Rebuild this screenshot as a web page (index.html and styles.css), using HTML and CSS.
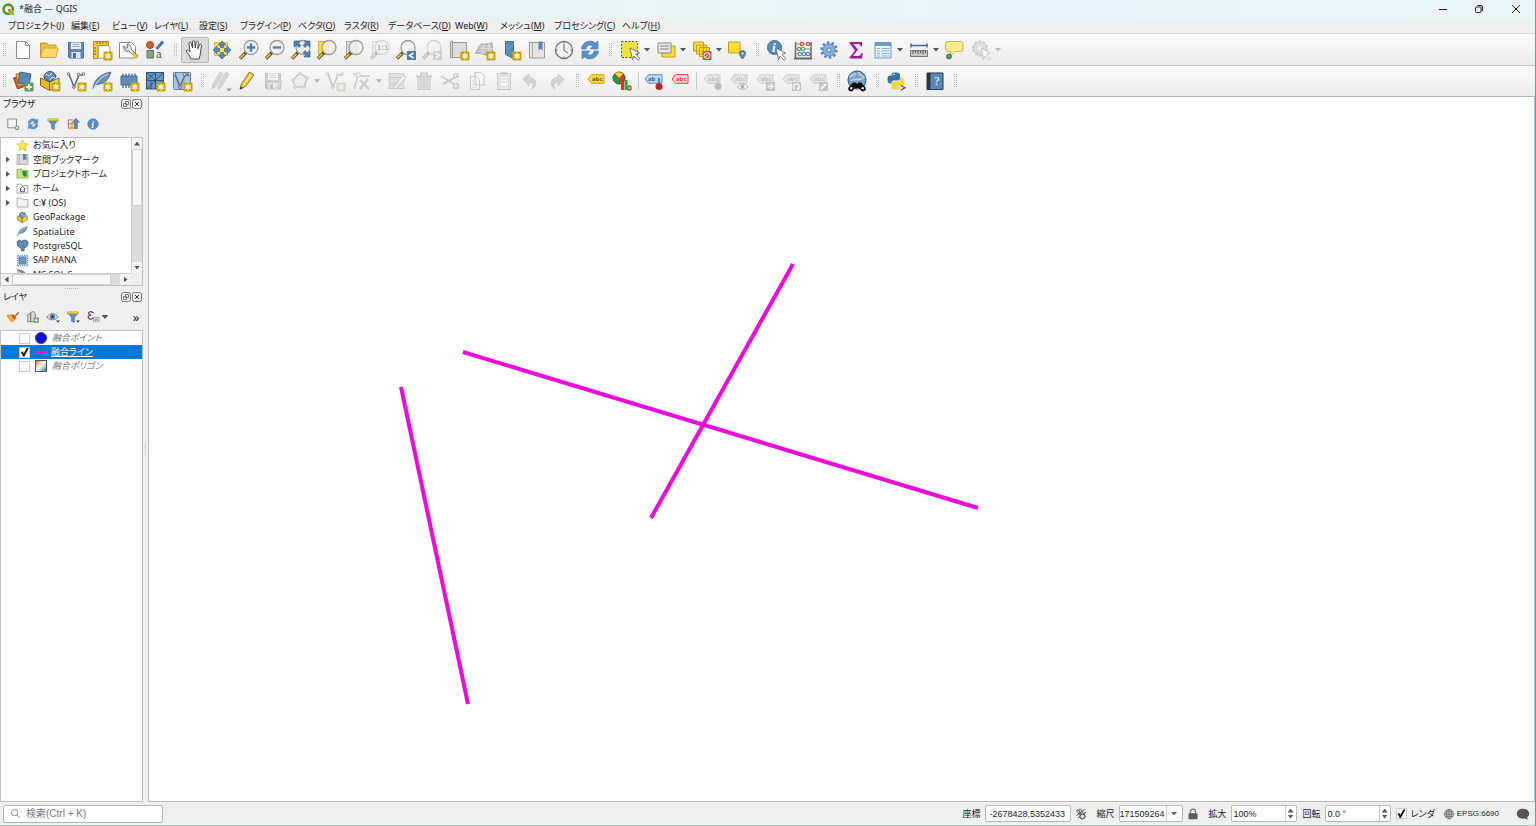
FILE: index.html
```html
<!DOCTYPE html>
<html lang="ja">
  <head>
    <meta charset="utf-8" />
    <meta name="viewport" content="width=device-width" />
    <title>*融合 — QGIS</title>
    <link rel="stylesheet" href="styles.css">
  </head>
  <body>
    <svg class="sprite" aria-hidden="true">
      <!-- shared pieces -->
      <symbol id="badge" viewBox="0 0 24 24">
        <rect x="13.5" y="13.5" width="9" height="9" rx="1" fill="#c9a30c"/>
        <path d="M18 14.800v6.400M15.200 16.400l5.600 3.200M20.800 16.400l-5.600 3.200" stroke="#fff7cf" stroke-width="1.300"/>
      </symbol>
      <symbol id="lens" viewBox="0 0 24 24">
        <path d="M3 20.500l6-6" stroke="#4a4230" stroke-width="3.200"/>
        <path d="M3.200 20.200l4.300-4.300" stroke="#f2c230" stroke-width="1.800"/>
        <circle cx="14" cy="9.500" r="7" fill="#f0f0ec" fill-opacity=".8" stroke="#9b9b98" stroke-width="1.300"/>
      </symbol>
      <symbol id="cursor" viewBox="0 0 24 24">
        <path d="M12 10l9.500 5-3.700 1.300 4 4.200-1.700 1.700-4-4.200-1.600 3.600z" fill="#fff" stroke="#777" stroke-width="1"/>
      </symbol>
      <symbol id="tag" viewBox="0 0 24 24">
        <path d="M4 10l3.500-4.300H20v8.600H7.500z" fill="#d8d6d0" stroke="#aaa8a0"/>
        <text x="8" y="12" font-size="6" font-weight="bold" fill="#8b8b85">abc</text>
      </symbol>

      <!-- project -->
      <symbol id="i-new" viewBox="0 0 24 24"><path d="M5.500 3.500h9l4 4v13h-13z" fill="#fff" stroke="#888"/><path d="M14.500 3.500v4h4" fill="none" stroke="#888"/></symbol>
      <symbol id="i-open" viewBox="0 0 24 24"><path d="M3.500 19V5h6l1.500 2h8v3" fill="#e9bf45" stroke="#c49a2a"/><path d="M3.500 19.500l3-9.500h14.500l-2 9.500z" fill="#ffda6b" stroke="#d6a932"/></symbol>
      <symbol id="i-save" viewBox="0 0 24 24"><path d="M4.500 4.500h15v15.500h-14l-1-1z" fill="#5c88b7" stroke="#48709b"/><path d="M7 4.500h10v6.500H7z" fill="#eef2f6"/><path d="M8.500 6.500h7M8.500 8.500h7" stroke="#9aabbd"/><path d="M7.500 14h9v6h-9z" fill="#dfe5ec"/><path d="M9 15h3v5H9z" fill="#456b94"/></symbol>
      <symbol id="i-layout" viewBox="0 0 24 24"><path d="M8 6.500h9l3 3V20H8z" fill="#fff" stroke="#999"/><path d="M3.500 3.500h15v4H8V20.500H3.500z" fill="#f4cf4a" stroke="#b08a12"/><path d="M7 4v2M10 4v2M13 4v2M16 4v2M4 10h2M4 13h2M4 16h2" stroke="#7b5f08"/><use href="#badge"/></symbol>
      <symbol id="i-manager" viewBox="0 0 24 24"><path d="M3.500 4.500h12l4 4V20h-16z" fill="#fff" stroke="#888"/><path d="M6 7h7v8H6z" fill="#dbe6f1"/><path d="M8 8a4 4 0 0 0 5 5l7 7 2-2-7-7a4 4 0 0 0-4-5l1 3-2 1.500z" fill="#e6e6e3" stroke="#777"/><path d="M16 15l5 5" stroke="#eac13e" stroke-width="3"/></symbol>
      <symbol id="i-style" viewBox="0 0 24 24"><circle cx="7" cy="7" r="3.500" fill="#d35d36" stroke="#a64424"/><path d="M13.500 11L20 3.500" stroke="#4c77a6" stroke-width="3"/><path d="M4 12.500h6.500V20H4z" fill="#7fa883" stroke="#517b58"/><text x="13" y="20" font-family="Liberation Sans" font-size="10" fill="#555">a</text></symbol>

      <!-- navigation -->
      <symbol id="i-pan" viewBox="0 0 24 24"><path d="M8 21c-1-3-3.500-6-5-8 .5-1.500 2-1.200 4 1L6 5.500c0-1.800 2-1.800 2.300 0L9.500 10V3.800c.2-1.600 2-1.600 2.200 0l.6 6 .8-5.500c.3-1.500 2.200-1.300 2.200.3l-.4 6.200 1.600-4c.6-1.300 2.300-.7 2 .8-.8 4-.8 9-2.500 13.400z" fill="#fff" stroke="#444"/></symbol>
      <symbol id="i-pansel" viewBox="0 0 24 24"><path d="M4.500 4.500h13v13h-13z" fill="#f7e34c" stroke="#d4bd35"/><path d="M12 3l4 4h-2.500v2.500h-3V7H8zM12 21l4-4h-2.500v-2.500h-3V17H8zM3 12l4-4v2.500h2.500v3H7V16zM21 12l-4-4v2.500h-2.500v3H17V16z" fill="#5b87b8" stroke="#3f658f" stroke-width=".7"/></symbol>
      <symbol id="i-zoomin" viewBox="0 0 24 24"><use href="#lens"/><path d="M14 5.300v8.400M9.800 9.500h8.400" stroke="#4c7cb2" stroke-width="2.300"/></symbol>
      <symbol id="i-zoomout" viewBox="0 0 24 24"><use href="#lens"/><path d="M9.800 9.500h8.400" stroke="#4c7cb2" stroke-width="2.300"/></symbol>
      <symbol id="i-full" viewBox="0 0 24 24"><use href="#lens"/><path d="M5 3h6L9.500 5l2.500 2.500-2 2L7.500 7 5 9zM21 3h-6l1.500 2L14 7.500l2 2L18.500 7 21 9zM21 19h-6l1.500-2-2.500-2.500 2-2 2.500 2.500 2.500-2z" fill="#517eaf" stroke="#41678f" stroke-width=".7"/></symbol>
      <symbol id="i-zoomsel" viewBox="0 0 24 24"><path d="M3.500 3.500h10v13h-10z" fill="#f8df38" stroke="#d0b424"/><use href="#lens"/></symbol>
      <symbol id="i-zoomlayer" viewBox="0 0 24 24"><path d="M4.500 3.500h10v13h-10z" fill="#e0e0de" stroke="#a5a5a2"/><use href="#lens"/></symbol>
      <symbol id="i-native" viewBox="0 0 24 24"><path d="M4.500 3.500h10v13h-10z" fill="#e0e0de" stroke="#a5a5a2"/><use href="#lens"/><text x="9" y="12" font-family="Liberation Sans" font-size="8" font-weight="bold" fill="#444">1:1</text></symbol>
      <symbol id="i-last" viewBox="0 0 24 24"><use href="#lens"/><path d="M13 13h9v9h-9z" fill="#4c7caf"/><path d="M19.500 15l-4 2.500 4 2.500" fill="none" stroke="#fff" stroke-width="1.500"/></symbol>
      <symbol id="i-next" viewBox="0 0 24 24"><use href="#lens"/><path d="M13 13h9v9h-9z" fill="#999"/><path d="M15.500 15l4 2.500-4 2.500" fill="none" stroke="#fff" stroke-width="1.500"/></symbol>
      <symbol id="i-mapview" viewBox="0 0 24 24"><path d="M3.500 4l2-1v16l-2 1zM5.500 4.500h14v15H3.500" fill="#deddda" stroke="#9a9a96"/><use href="#badge"/></symbol>
      <symbol id="i-3d" viewBox="0 0 24 24"><path d="M2 15c3-1 3-8 7-9 4 1 6-1 10-1l1 11c-6 3-10-1-18-1z" fill="#c8c7c4" stroke="#a09f9b"/><path d="M6 10l14 1M11 6l-2 10M16 5v12" stroke="#e2e2e0" fill="none"/><use href="#badge"/></symbol>
      <symbol id="i-newbook" viewBox="0 0 24 24"><path d="M6.500 3.500h8v17l-8-4z" fill="#5e8cbd" stroke="#446c96"/><use href="#badge"/></symbol>
      <symbol id="i-books" viewBox="0 0 24 24"><path d="M4.500 4.500h15V20h-15z" fill="#e5e4e1" stroke="#999"/><path d="M7.500 4v16" stroke="#aaa"/><path d="M13.500 3.500h4v9l-2-1.800-2 1.800z" fill="#5684b5"/></symbol>
      <symbol id="i-clock" viewBox="0 0 24 24"><circle cx="12" cy="12" r="8.500" fill="#f2f2f0" stroke="#70757a" stroke-width="1.300"/><path d="M12 6v6.500l4 2.500M12 4v1.500M12 18.500V20M4 12h1.500M18.500 12H20" fill="none" stroke="#667"/></symbol>
      <symbol id="i-refresh" viewBox="0 0 24 24"><path d="M3.500 11C4 3.500 13 1 17.500 5L20 3v8h-8l2.700-2.800C12.500 6 8.500 7 8 11zM20.500 13c-.5 7.500-9.500 10-14 6L4 21v-8h8l-2.700 2.800c2.200 2.200 6.200 1.200 6.700-2.800z" fill="#5a90cc" stroke="#4477ad" stroke-width=".6"/></symbol>

      <!-- selection -->
      <symbol id="i-select" viewBox="0 0 24 24"><path d="M3.500 3.500h16v16h-16z" fill="#f8e03c" stroke="#555" stroke-dasharray="2 1.500"/><use href="#cursor"/></symbol>
      <symbol id="i-selform" viewBox="0 0 24 24"><path d="M8 8h13v11H8z" fill="#f8df38" stroke="#bea21a"/><path d="M4 5h13v10H4z" fill="#e8e8e4" stroke="#8a8a86"/><path d="M6 8h9M6 11h9" stroke="#8a8a86"/></symbol>
      <symbol id="i-deselect" viewBox="0 0 24 24"><path d="M3.500 4h10v9h-10zM6.500 7h10v9h-10zM9.500 9.500h10v9h-10z" fill="#f8df38" stroke="#bea21a"/><rect x="12.5" y="13" width="9" height="9" rx="1" fill="#d94842"/><circle cx="17" cy="17.500" r="3" fill="none" stroke="#fff"/><path d="M15 19.500l4-4" stroke="#fff"/></symbol>
      <symbol id="i-selloc" viewBox="0 0 24 24"><path d="M3.500 4h11.500v11H3.500z" fill="#f8df38" stroke="#bea21a"/><path d="M17.500 21c-2-3-3-4-3-5.500a3 3 0 0 1 6 0c0 1.500-1 2.500-3 5.500z" fill="#5d87ad" stroke="#46698a"/><circle cx="17.500" cy="15.500" r="1" fill="#fff"/></symbol>
      <symbol id="i-identify" viewBox="0 0 24 24"><circle cx="10.500" cy="9.500" r="7" fill="#5a88bb" stroke="#4270a2"/><text x="8" y="14" font-family="Liberation Serif" font-size="13" font-style="italic" font-weight="bold" fill="#fff">i</text><use href="#cursor"/></symbol>
      <symbol id="i-abacus" viewBox="0 0 24 24"><path d="M4.500 4v16M20 4v16" stroke="#666" stroke-width="1.500"/><path d="M3 20.500h18" stroke="#666" stroke-width="2"/><path d="M4 6h16M4 11h16M4 16h16" stroke="#888"/><g stroke-width="1.200" fill="#fff"><g stroke="#d4453f"><circle cx="11" cy="6" r="1.600"/><circle cx="17" cy="6" r="1.600"/></g><g stroke="#52a85b"><circle cx="8" cy="11" r="1.600"/><circle cx="12" cy="11" r="1.600"/></g><g stroke="#4a8dad"><circle cx="9" cy="16" r="1.600"/><circle cx="13" cy="16" r="1.600"/><circle cx="17" cy="16" r="1.600"/></g></g></symbol>
      <symbol id="i-gear" viewBox="0 0 24 24"><circle cx="12" cy="12" r="7.300" fill="none" stroke="#5584b6" stroke-width="3" stroke-dasharray="2.400 2.187"/><circle cx="12" cy="12" r="6.200" fill="#86aedb" stroke="#5b8bc0"/><circle cx="12" cy="12" r="2" fill="#e8f0f8" stroke="#4f7aab"/></symbol>
      <symbol id="i-sigma" viewBox="0 0 24 24"><path d="M5.500 4h12.500v4.500h-1.300C16.300 6.700 15.500 6 14 6H9.500l4.500 5.700L8.800 18H14c2 0 3-1 3.500-3h1.300L18 20.500H5.500v-1l5.500-7-5.500-7.500z" fill="#a019a0"/></symbol>
      <symbol id="i-table" viewBox="0 0 24 24"><path d="M4 4.500h16V20H4z" fill="#eef4fa" stroke="#6c95bf"/><path d="M4 4.500h16V8H4z" fill="#6c9aca"/><path d="M6 10.500h3M10.500 10.500h8M6 13h3M10.500 13h8M6 15.500h3M10.500 15.500h8M6 18h3M10.500 18h8" stroke="#8aafd3"/></symbol>
      <symbol id="i-measure" viewBox="0 0 24 24"><path d="M4 7.500h16M4 5.500v4M20 5.500v4" stroke="#446b99" stroke-width="1.500"/><path d="M3.500 12.500h17v6h-17z" fill="#c9c9c6" stroke="#777"/><path d="M6 13v3M8.500 13v2M11 13v3M13.500 13v2M16 13v3M18.500 13v2" stroke="#555"/></symbol>
      <symbol id="i-tip" viewBox="0 0 24 24"><path d="M6 3.500h12.500q2.500 0 2.500 2.500v5q0 2.500-2.500 2.500h-5L7.500 18.500 9 13.500H6Q3.500 13.500 3.500 11V6Q3.500 3.500 6 3.500z" fill="#f8ed8b" stroke="#c8b645"/><circle cx="7" cy="18.500" r="2.500" fill="#5f9b62" stroke="#3e7643"/></symbol>
      <symbol id="i-action" viewBox="0 0 24 24"><circle cx="11" cy="10.500" r="6.500" fill="#ccc" stroke="#888" stroke-width="3" stroke-dasharray="3 1"/><circle cx="11" cy="10.500" r="3.500" fill="#eee" stroke="#888"/><use href="#cursor"/></symbol>

      <!-- data sources -->
      <symbol id="i-dsm" viewBox="0 0 24 24"><path d="M2.500 9l9-3 3 11-8 3z" fill="#cf5c35" stroke="#9c4121"/><path d="M5 5l9-1 1 12-8 1z" fill="#eab437" stroke="#a97c19"/><path d="M9 3l11 2-2 11-11-2z" fill="#5c88b7" stroke="#3b6189"/><rect x="13.5" y="13.5" width="9" height="9" rx="1" fill="#5d9a5f"/><path d="M18 15v6M15 18h6" stroke="#fff" stroke-width="1.500"/></symbol>
      <symbol id="i-gpkg" viewBox="0 0 24 24"><path d="M2.500 9l9 4v8.500l-9-5z" fill="#e8bc24" stroke="#7b6415"/><path d="M21 9l-9.500 4v8.500l9.500-5z" fill="#f6d23e" stroke="#7b6415"/><path d="M6 9a6 6 0 0 1 12-1l-6 5z" fill="#5f8dbd" stroke="#34516f"/><path d="M8 5l3 2 3-3M12 11l2-3 3 1" fill="none" stroke="#dce8f2"/></symbol>
      <symbol id="i-gpkgnew" viewBox="0 0 24 24"><use href="#i-gpkg"/><use href="#badge"/></symbol>
      <symbol id="i-shp" viewBox="0 0 24 24"><path d="M5 5l5 13 5-12h4" fill="none" stroke="#586878" stroke-width="1.500"/><g fill="#fff" stroke="#666"><circle cx="4.500" cy="5" r="1.300"/><circle cx="10" cy="18" r="1.300"/><circle cx="14.500" cy="5.500" r="1.300"/><circle cx="19.500" cy="5" r="1.300"/></g></symbol>
      <symbol id="i-shpnew" viewBox="0 0 24 24"><use href="#i-shp"/><use href="#badge"/></symbol>
      <symbol id="i-feather" viewBox="0 0 24 24"><path d="M3 20c1-9 7-15 18-17-2 5-4 11-12 12l-4 1z" fill="#6792c0" stroke="#456b94"/><path d="M3 21C6 13 11 8 18 5" fill="none" stroke="#e5edf5"/></symbol>
      <symbol id="i-spatialite" viewBox="0 0 24 24"><use href="#i-feather"/><use href="#badge"/></symbol>
      <symbol id="i-memory" viewBox="0 0 24 24"><path d="M4 7h16v9H4z" fill="#5e8bbc" stroke="#42688f"/><path d="M6 4.500V7M9 4.500V7M12 4.500V7M15 4.500V7M18 4.500V7M6 16v3M9 16v3M12 16v3M15 16v3" stroke="#5d7896" stroke-width="1.500"/><use href="#badge"/></symbol>
      <symbol id="i-mesh" viewBox="0 0 24 24"><path d="M3.500 3.500h17V20h-17z" fill="#6794c6" stroke="#334f6f"/><path d="M3 11.500h18M12.500 3.500V20M3.500 3.500l9 8M12.500 3.500l-9 8M12.500 11.500l8-8M3.500 20l9-8.500M8 11.500V20" fill="none" stroke="#2f4f72" stroke-width=".9"/><use href="#badge"/></symbol>
      <symbol id="i-virtual" viewBox="0 0 24 24"><rect x="3.5" y="3.5" width="17" height="17" rx="1" fill="#a7c5e4" stroke="#5c83ab"/><use href="#i-shp"/><use href="#badge"/></symbol>

      <!-- digitizing -->
      <symbol id="i-pencil" viewBox="0 0 24 24"><path d="M5 20l1.500-5.500L14.500 3l4.500 3L10.500 17.500z" fill="#e6c63c" stroke="#8e771f"/><path d="M8.500 16L16.500 5" stroke="#fbe989" stroke-width="1.500"/><path d="M5 20.500l.8-3 2.400 1.700z" fill="#333"/></symbol>
      <symbol id="i-edits" viewBox="0 0 24 24"><path d="M3 20l1-5L11 3l3 2-8 13zM9 20l1-5L17 3l3 2-8 13z" fill="#a89c98" stroke="#8b8280"/><path d="M17 19.500h6L20 22.500z" fill="#000"/></symbol>
      <symbol id="i-saveedit" viewBox="0 0 24 24"><use href="#i-save"/><path d="M12 20l8-9 2 2-8 8z" fill="#aaa"/></symbol>
      <symbol id="i-poly" viewBox="0 0 24 24"><path d="M5 11l7-7 7 5-3 9H7z" fill="#e5e5e5" stroke="#777" stroke-width="1.500"/><g fill="#fff" stroke="#777"><circle cx="5" cy="11" r="1.300"/><circle cx="12" cy="4.500" r="1.300"/><circle cx="19" cy="9" r="1.300"/><circle cx="16" cy="18" r="1.300"/><circle cx="7" cy="18" r="1.300"/></g></symbol>
      <symbol id="i-vertex" viewBox="0 0 24 24"><path d="M4 20L8 7h12M3 5h5" fill="none" stroke="#777" stroke-width="1.300"/><path d="M10 11l9 9M18 10l-8 10" stroke="#888" stroke-width="2.300"/><path d="M6 4h4v4H6z" fill="#eee" stroke="#777"/></symbol>
      <symbol id="i-modify" viewBox="0 0 24 24"><path d="M4 4.500h15v4H4zM4 10h15v4H4zM4 15.500h15v4H4z" fill="#c7c79a" stroke="#888"/><path d="M8 19L18 6l3 2-10 12z" fill="#eee" stroke="#777"/></symbol>
      <symbol id="i-trash" viewBox="0 0 24 24"><path d="M4 7.500h16M9 7V4.500h6V7" fill="none" stroke="#a77" stroke-width="2"/><path d="M6 9h12v11.500H6z" fill="#dbb" stroke="#977"/><path d="M9 10v9M12 10v9M15 10v9" stroke="#977"/></symbol>
      <symbol id="i-cut" viewBox="0 0 24 24"><path d="M3 7l13 8M5 15l15-8" stroke="#888" stroke-width="2"/><circle cx="18" cy="17" r="2.500" fill="none" stroke="#888" stroke-width="1.500"/><circle cx="18" cy="6.500" r="2" fill="none" stroke="#888" stroke-width="1.500"/></symbol>
      <symbol id="i-copy" viewBox="0 0 24 24"><path d="M10 3.500h6l3 3V16h-9zM5.500 7.500h6l3 3v10h-9z" fill="#fff" stroke="#777"/><path d="M7 12h5M7 15h5M7 18h5" stroke="#999"/></symbol>
      <symbol id="i-paste" viewBox="0 0 24 24"><path d="M5.500 4.500h13v16h-13z" fill="#ddd" stroke="#777"/><path d="M8 7h8v11H8z" fill="#fff" stroke="#999"/><path d="M9 3h6v3H9z" fill="#888"/><path d="M9.500 10h5M9.500 13h5" stroke="#999"/></symbol>
      <symbol id="i-undo" viewBox="0 0 24 24"><path d="M5 10l6-5v3.500c8 0 9 8 3 11.500 2-4 1-6.500-3-6.500v3.500z" fill="#999" stroke="#888"/></symbol>
      <symbol id="i-redo" viewBox="0 0 24 24"><path d="M19 10l-6-5v3.500c-8 0-9 8-3 11.500-2-4-1-6.500 3-6.500v3.500z" fill="#999" stroke="#888"/></symbol>

      <!-- labels -->
      <symbol id="i-label" viewBox="0 0 24 24"><path d="M4 10l3.500-4.300H20v8.600H7.500z" fill="#fbdc34" stroke="#c9a512"/><text x="8" y="12" font-size="6" font-weight="bold" fill="#66540f">abc</text></symbol>
      <symbol id="i-diagram" viewBox="0 0 24 24"><circle cx="9" cy="9" r="6" fill="#e33327" stroke="#343"/><path d="M9 9L5 4.500A6 6 0 0 1 13 5z" fill="#f8e22e"/><path d="M9 9v6a6 6 0 0 1-5-9z" fill="#19a33a"/><path d="M11 13h3v8h-3z" fill="#e33327"/><path d="M14.500 11h3v10h-3z" fill="#20a83a"/><path d="M18 17h3v4h-3z" fill="#e9c823" stroke="#554"/></symbol>
      <symbol id="i-pin" viewBox="0 0 24 24"><path d="M3 10l3.500-4.300H20v8.600H6.500z" fill="#bbd8f6" stroke="#5d90c7"/><text x="6" y="12" font-size="6" font-weight="bold" fill="#35608e">ab</text><path d="M17 9v9" stroke="#456" stroke-width="1.500"/><circle cx="17" cy="17.500" r="3.500" fill="#b7262c"/></symbol>
      <symbol id="i-unplaced" viewBox="0 0 24 24"><path d="M4 10l3.500-4.300H20v8.600H7.500z" fill="#ffdcdc" stroke="#f13a3a"/><text x="8" y="12" font-size="6" font-weight="bold" fill="#e33">abc</text></symbol>
      <symbol id="i-lpin" viewBox="0 0 24 24"><use href="#tag"/><path d="M18 9v8" stroke="#888"/><circle cx="18" cy="17.500" r="3.500" fill="#9a8585"/></symbol>
      <symbol id="i-lshow" viewBox="0 0 24 24"><use href="#tag"/><path d="M10 18q6-6 11 0-5 5-11 0z" fill="#fff" stroke="#777"/><circle cx="15.500" cy="17.800" r="2" fill="#777"/></symbol>
      <symbol id="i-lmove" viewBox="0 0 24 24"><use href="#tag"/><path d="M13 13h9v9h-9z" fill="#999"/><path d="M14.500 17.500h5M17.500 15l2.500 2.500-2.500 2.500" fill="none" stroke="#fff" stroke-width="1.300"/></symbol>
      <symbol id="i-lrotate" viewBox="0 0 24 24"><use href="#tag"/><path d="M13 13h9v9h-9z" fill="#999"/><path d="M16 20.500a3 3 0 1 1 3 0v-2.500" fill="none" stroke="#fff" stroke-width="1.300"/></symbol>
      <symbol id="i-lchange" viewBox="0 0 24 24"><use href="#tag"/><path d="M13 13h9v9h-9z" fill="#999"/><path d="M15 20l5-5" stroke="#fff" stroke-width="2"/></symbol>
      <symbol id="i-metasearch" viewBox="0 0 24 24"><circle cx="12" cy="11" r="9" fill="#7da3c8" stroke="#334e6c"/><path d="M4.500 9c2-4 5-2 6-5M14 3c-1 4 4 2 5.500 6M6 12c3-4 8 1 12-3" fill="none" stroke="#c5d7e7" stroke-width="1.500"/><path d="M8 13.500h2.500L12 15l1.500-1.500H16l4.500 5a2.500 2.500 0 0 1-5 2.200L13.500 19h-3l-2 1.700a2.500 2.500 0 0 1-5-2.200z" fill="#050505"/><circle cx="6.300" cy="19.300" r="1.200" fill="#fff"/><circle cx="17.700" cy="19.300" r="1.200" fill="#fff"/></symbol>
      <symbol id="i-python" viewBox="0 0 24 24"><path d="M11.500 3.500c4 0 4.500 1 4.500 3v3q0 2-2 2h-4q-2.500 0-2.500 3H6q-2.500 0-2.500-4t2.500-4h6V7H7.500c-.3-2.500 1-3.500 4-3.500z" fill="#3674a8"/><path d="M12 20.500c-4 0-4.500-1-4.500-3v-3q0-2 2-2h4.500q2.500 0 2.500-4H18q2.500 1 2.500 4.500T18 17h-6v.7h4.500c0 2-1 2.800-4.500 2.800z" fill="#fbd342"/><circle cx="10" cy="5.500" r=".8" fill="#fff"/><path d="M17 16.500l4 2.200-4 2.300" fill="none" stroke="#555" stroke-width="1.300"/></symbol>
      <symbol id="i-help" viewBox="0 0 24 24"><path d="M4 4h16v16.500H4z" fill="#5a88b9" stroke="#334"/><path d="M4 4h3.500v16.500H4z" fill="#283748"/><text x="11" y="16" font-family="Liberation Serif" font-size="12" fill="#fff">?</text></symbol>

      <!-- panels -->
      <symbol id="i-add" viewBox="0 0 24 24"><path d="M3 3.500h15v15H3z" fill="#f5f5f5" stroke="#777" stroke-width="1.400"/><circle cx="19" cy="18.500" r="4" fill="#5f9d62"/><path d="M19 16v5M16.500 18.500h5" stroke="#fff" stroke-width="1.500"/></symbol>
      <symbol id="i-filter" viewBox="0 0 24 24"><path d="M3 5h18l-6.500 8v8.500l-5-2V13z" fill="#5f8dbe" stroke="#48719b"/><path d="M3 3h18v3.500H3z" fill="#f3d93f" stroke="#a89a3b"/></symbol>
      <symbol id="i-collapse" viewBox="0 0 24 24"><path d="M4 5v15M4 5h8M4 12h6M4 19h6" fill="none" stroke="#777" stroke-width="1.500"/><path d="M7 9h6v5H7zM7 16h6v5H7z" fill="#f5a23a"/><path d="M17 2l6 7h-3.500v11h-5V9H11z" fill="#5d86b3" stroke="#3d6188"/></symbol>
      <symbol id="i-info" viewBox="0 0 24 24"><circle cx="12" cy="12" r="9" fill="#5a8bc4" stroke="#4775a8"/><text x="9" y="18" font-family="Liberation Serif" font-size="17" font-style="italic" font-weight="bold" fill="#fff">i</text></symbol>
      <symbol id="i-star" viewBox="0 0 24 24"><path d="M12 1.500l3.200 7 7.300.8-5.500 5 1.600 7.700L12 18l-6.600 4L7 14.300 1.500 9.300l7.300-.8z" fill="#fbe84c" stroke="#c4a21d"/></symbol>
      <symbol id="i-bookmark" viewBox="0 0 24 24"><path d="M2 3h20v18H2z" fill="#dddcd9" stroke="#a3a3a0" stroke-width="1.500"/><path d="M6 3v18" stroke="#aaa" stroke-width="1.500"/><path d="M13 2h6v12l-3-2.500-3 2.500z" fill="#5684b5"/></symbol>
      <symbol id="i-home" viewBox="0 0 24 24"><path d="M2 20.500V4h8l2 2.500h10v14z" fill="#f4f4f4" stroke="#888" stroke-width="1.300"/><path d="M7 13l5-5 5 5M8.500 12v6h7v-6" fill="none" stroke="#555" stroke-width="1.800"/></symbol>
      <symbol id="i-phome" viewBox="0 0 24 24"><path d="M2 20.500V4h8l2 2.500h10v14z" fill="#c7e37b" stroke="#6d9e2d" stroke-width="1.300"/><path d="M11 8h9v9l-5 1-2-3z" fill="#1e9a32"/></symbol>
      <symbol id="i-folder" viewBox="0 0 24 24"><path d="M2 20.500V4h8l2 2.500h10v14z" fill="#f3f3f3" stroke="#999" stroke-width="1.400"/></symbol>
      <symbol id="i-pg" viewBox="0 0 24 24"><path d="M2 5c3-4 6-3 8-1 4-3 11-3 12 2 1 4-1 7-3 9l-4 1v6h-5l-1-7c-4 2-7-2-7-10z" fill="#5a84b0" stroke="#3a5f87" stroke-width="1.300"/><path d="M9 6c-1 4 1 6 0 9M16 5c2 3 0 6 2 9" fill="none" stroke="#9db8d3"/></symbol>
      <symbol id="i-hana" viewBox="0 0 24 24"><path d="M5 5h14v14H5z" fill="#6793c2" stroke="#5079a4"/><path d="M3 2.500h19M3 21.500h19M2.500 3v18M21.500 3v18" stroke="#5b86b4" stroke-width="2" stroke-dasharray="2 2"/></symbol>
      <symbol id="i-mssql" viewBox="0 0 24 24"><path d="M2 3c9 0 16 4 20 14l-7 5C15 13 10 8 2 3z" fill="#5d88b5" stroke="#456d97"/><path d="M2 3c1 6 1 12 6 18l6-3" fill="#86a9cc"/></symbol>
      <symbol id="i-broom" viewBox="0 0 24 24"><path d="M2 9l10-1 4 7-5 6C7 19 4 14 2 9z" fill="#f1ad34" stroke="#b97a1a"/><path d="M11 9l5 6" stroke="#d5462f" stroke-width="4"/><path d="M15 11l7-7" stroke="#b07a3e" stroke-width="3"/></symbol>
      <symbol id="i-group" viewBox="0 0 24 24"><path d="M3 20V8l5-3v15zM8 4.500q6-4 8 2V20H8z" fill="#ddd" stroke="#777" stroke-width="1.500"/><path d="M13 13h9v9h-9z" fill="#64a267"/><path d="M17.500 14.500v6M14.500 17.500h6" stroke="#fff" stroke-width="1.500"/></symbol>
      <symbol id="i-eye" viewBox="0 0 24 24"><path d="M1 12q10-12 20 0-10 10-20 0z" fill="#e6e6e6" stroke="#777" stroke-width="1.500"/><circle cx="11" cy="11.500" r="4.500" fill="#5987b8"/><circle cx="11" cy="11.500" r="2" fill="#234"/><path d="M17 18h7l-3.500 4z" fill="#444"/></symbol>
      <symbol id="i-lfilter" viewBox="0 0 24 24"><use href="#i-filter"/><path d="M17 18h7l-3.500 4z" fill="#444"/></symbol>
      <symbol id="i-expr" viewBox="0 0 24 24"><path d="M13 5C8 1 3 4 5 7q1 2 4 2-6 0-5 4 2 5 9 1" fill="none" stroke="#704a7f" stroke-width="2.300"/><path d="M13 21v-8h9v8M16 21v-5h3v5" fill="none" stroke="#888" stroke-width="1.300"/></symbol>
      <symbol id="i-extent" viewBox="0 0 24 24"><path d="M3 5l8-3 10 16-6 4z" fill="#ddd" stroke="#444" stroke-width="1.500"/><path d="M3 15L19 3M6 20L22 8M7 4l10 16" stroke="#444" stroke-width="2"/><circle cx="15" cy="17" r="5" fill="#ddd" stroke="#444" stroke-width="2"/></symbol>
      <symbol id="i-lock" viewBox="0 0 24 24"><path d="M7 11V7a5 5 0 0 1 10 0v4" fill="none" stroke="#777" stroke-width="2.500"/><rect x="3" y="10.5" width="18" height="12" rx="1.500" fill="#5c5c5c"/></symbol>
      <symbol id="i-crs" viewBox="0 0 24 24"><circle cx="12" cy="12" r="9.500" fill="#bbb" stroke="#777"/><path d="M1 12h22M12 2v20M4 7h16M4 17h16" stroke="#666" stroke-width="1.300"/><ellipse cx="12" cy="12" rx="5" ry="9.500" fill="none" stroke="#666" stroke-width="1.300"/></symbol>
      <symbol id="i-bubble" viewBox="0 0 24 24"><path d="M12 3c6 0 10.500 3.500 10.500 8.500 0 3-1.500 5-3.500 6.300l1.500 4.200-5.500-2.300c-8 1.300-13.500-2.700-13.500-8.200S6 3 12 3z" fill="#555"/></symbol>
    </svg>

    <header class="titlebar">
      <svg class="logo" viewBox="0 0 24 24"><circle cx="11.500" cy="11.500" r="8.500" fill="#fff" stroke="#589632" stroke-width="5"/><path d="M11 11h5l7 8v4h-4l-8-7z" fill="#93b023" stroke="#fff"/><path d="M11 11h4l2 2-4 4-2-2z" fill="#ee7913"/></svg>
      <h1>*融合 — QGIS</h1>
      <div class="window-buttons">
        <button title="最小化"><svg viewBox="0 0 10 10"><path d="M1 5.500h8"/></svg></button>
        <button title="元に戻す"><svg viewBox="0 0 10 10"><rect x="1.5" y="3" width="5.5" height="5.5" rx="1"/><path d="M3.500 1.500H7Q8.500 1.500 8.500 3v4"/></svg></button>
        <button title="閉じる"><svg viewBox="0 0 10 10"><path d="M1 1l8 8M9 1L1 9"/></svg></button>
      </div>
    </header>

    <nav class="menubar">
      <button>プロジェクト(<u>J</u>)</button>
      <button>編集(<u>E</u>)</button>
      <button>ビュー(<u>V</u>)</button>
      <button>レイヤ(<u>L</u>)</button>
      <button>設定(<u>S</u>)</button>
      <button>プラグイン(<u>P</u>)</button>
      <button>ベクタ(<u>O</u>)</button>
      <button>ラスタ(<u>R</u>)</button>
      <button>データベース(<u>D</u>)</button>
      <button>Web(<u>W</u>)</button>
      <button>メッシュ(<u>M</u>)</button>
      <button>プロセシング(<u>C</u>)</button>
      <button>ヘルプ(<u>H</u>)</button>
    </nav>

    <div class="toolbar">
      <span class="grip first"></span>
      <div class="group project">
        <button title="新規"><svg><use href="#i-new"/></svg></button>
        <button title="開く"><svg><use href="#i-open"/></svg></button>
        <button title="保存"><svg><use href="#i-save"/></svg></button>
        <button title="新規レイアウト"><svg><use href="#i-layout"/></svg></button>
        <button title="レイアウトマネージャ"><svg><use href="#i-manager"/></svg></button>
        <button title="スタイルマネージャ"><svg><use href="#i-style"/></svg></button>
      </div>
      <span class="grip"></span>
      <div class="group navigation">
        <button title="地図移動" class="pressed"><svg><use href="#i-pan"/></svg></button>
        <button title="選択部分に移動"><svg><use href="#i-pansel"/></svg></button>
        <button title="拡大"><svg><use href="#i-zoomin"/></svg></button>
        <button title="縮小"><svg><use href="#i-zoomout"/></svg></button>
        <button title="全域表示"><svg><use href="#i-full"/></svg></button>
        <button title="選択部分にズーム"><svg><use href="#i-zoomsel"/></svg></button>
        <button title="レイヤにズーム"><svg><use href="#i-zoomlayer"/></svg></button>
        <button title="ネイティブ解像度" disabled><svg><use href="#i-native"/></svg></button>
        <button title="直前の表示"><svg><use href="#i-last"/></svg></button>
        <button title="次の表示" disabled><svg><use href="#i-next"/></svg></button>
        <button title="新規地図ビュー"><svg><use href="#i-mapview"/></svg></button>
        <button title="新規3D地図ビュー"><svg><use href="#i-3d"/></svg></button>
        <button title="新規ブックマーク"><svg><use href="#i-newbook"/></svg></button>
        <button title="ブックマークを表示"><svg><use href="#i-books"/></svg></button>
        <button title="時系列コントローラ"><svg><use href="#i-clock"/></svg></button>
        <button title="再読み込み"><svg><use href="#i-refresh"/></svg></button>
      </div>
      <span class="grip"></span>
      <button class="menu" title="地物を選択"><svg><use href="#i-select"/></svg></button>
      <button class="menu" title="値による選択"><svg><use href="#i-selform"/></svg></button>
      <button class="menu" title="選択解除"><svg><use href="#i-deselect"/></svg></button>
      <button title="場所による選択"><svg><use href="#i-selloc"/></svg></button>
      <span class="grip"></span>
      <div class="group attributes">
        <button title="地物情報表示"><svg><use href="#i-identify"/></svg></button>
        <button title="フィールド計算機"><svg><use href="#i-abacus"/></svg></button>
        <button title="ツールボックス"><svg><use href="#i-gear"/></svg></button>
        <button title="統計"><svg><use href="#i-sigma"/></svg></button>
      </div>
      <button class="menu" title="属性テーブル"><svg><use href="#i-table"/></svg></button>
      <button class="menu" title="測定"><svg><use href="#i-measure"/></svg></button>
      <button title="地図のヒント"><svg><use href="#i-tip"/></svg></button>
      <button class="menu" title="アクション" disabled><svg><use href="#i-action"/></svg></button>
    </div>

    <div class="toolbar">
      <span class="grip first"></span>
      <div class="group sources">
        <button title="データソースマネージャ"><svg><use href="#i-dsm"/></svg></button>
        <button title="新規GeoPackage"><svg><use href="#i-gpkgnew"/></svg></button>
        <button title="新規シェープファイル"><svg><use href="#i-shpnew"/></svg></button>
        <button title="新規SpatiaLite"><svg><use href="#i-spatialite"/></svg></button>
        <button title="一時スクラッチレイヤ"><svg><use href="#i-memory"/></svg></button>
        <button title="新規メッシュ"><svg><use href="#i-mesh"/></svg></button>
        <button title="新規仮想レイヤ"><svg><use href="#i-virtual"/></svg></button>
      </div>
      <span class="grip"></span>
      <button title="現在の編集" disabled><svg><use href="#i-edits"/></svg></button>
      <button title="編集モード切替"><svg><use href="#i-pencil"/></svg></button>
      <button title="編集内容を保存" disabled><svg><use href="#i-saveedit"/></svg></button>
      <button class="menu" title="地物を追加" disabled><svg><use href="#i-poly"/></svg></button>
      <button title="線地物を追加" disabled><svg><use href="#i-shpnew"/></svg></button>
      <button class="menu" title="頂点ツール" disabled><svg><use href="#i-vertex"/></svg></button>
      <div class="group edit">
        <button title="属性を変更" disabled><svg><use href="#i-modify"/></svg></button>
        <button title="削除" disabled><svg><use href="#i-trash"/></svg></button>
        <button title="切り取り" disabled><svg><use href="#i-cut"/></svg></button>
        <button title="コピー" disabled><svg><use href="#i-copy"/></svg></button>
        <button title="貼り付け" disabled><svg><use href="#i-paste"/></svg></button>
        <button title="元に戻す" disabled><svg><use href="#i-undo"/></svg></button>
        <button title="やり直す" disabled><svg><use href="#i-redo"/></svg></button>
      </div>
      <span class="grip"></span>
      <button title="ラベル"><svg><use href="#i-label"/></svg></button>
      <button title="ダイアグラム"><svg><use href="#i-diagram"/></svg></button>
      <span class="separator"></span>
      <button title="固定ラベル"><svg><use href="#i-pin"/></svg></button>
      <button title="未配置ラベル"><svg><use href="#i-unplaced"/></svg></button>
      <span class="separator"></span>
      <div class="group labels">
        <button title="ラベルを固定" disabled><svg><use href="#i-lpin"/></svg></button>
        <button title="ラベルを表示" disabled><svg><use href="#i-lshow"/></svg></button>
        <button title="ラベルを移動" disabled><svg><use href="#i-lmove"/></svg></button>
        <button title="ラベルを回転" disabled><svg><use href="#i-lrotate"/></svg></button>
        <button title="ラベルを変更" disabled><svg><use href="#i-lchange"/></svg></button>
      </div>
      <span class="grip"></span>
      <button title="MetaSearch"><svg><use href="#i-metasearch"/></svg></button>
      <span class="grip"></span>
      <button title="Pythonコンソール"><svg><use href="#i-python"/></svg></button>
      <span class="grip"></span>
      <button title="ヘルプ"><svg><use href="#i-help"/></svg></button>
      <span class="grip"></span>
    </div>

    <main>
      <aside>
        <section class="browser">
          <div class="dock-title">
            <h2>ブラウザ</h2>
            <button title="フロート"><svg viewBox="0 0 10 10"><rect x=".5" y=".5" width="9" height="9" rx="2"/><path d="M4.500 2.500h3v3h-3zM2.500 4.500h3v3h-3z"/></svg></button>
            <button title="閉じる"><svg viewBox="0 0 10 10"><rect x=".5" y=".5" width="9" height="9" rx="2"/><path class="cross" d="M3 3l4 4M7 3L3 7"/></svg></button>
          </div>
          <div class="dock-tools">
            <button title="追加"><svg><use href="#i-add"/></svg></button>
            <button title="更新"><svg><use href="#i-refresh"/></svg></button>
            <button title="フィルタ"><svg><use href="#i-filter"/></svg></button>
            <button title="折りたたむ"><svg><use href="#i-collapse"/></svg></button>
            <button title="プロパティ"><svg><use href="#i-info"/></svg></button>
          </div>
          <div class="tree-frame">
            <div class="tree-view">
              <ul class="tree">
                <li><svg><use href="#i-star"/></svg>お気に入り</li>
                <li class="branch"><svg><use href="#i-bookmark"/></svg>空間ブックマーク</li>
                <li class="branch"><svg><use href="#i-phome"/></svg>プロジェクトホーム</li>
                <li class="branch"><svg><use href="#i-home"/></svg>ホーム</li>
                <li class="branch"><svg><use href="#i-folder"/></svg>C:¥ (OS)</li>
                <li><svg><use href="#i-gpkg"/></svg>GeoPackage</li>
                <li><svg><use href="#i-feather"/></svg>SpatiaLite</li>
                <li><svg><use href="#i-pg"/></svg>PostgreSQL</li>
                <li><svg><use href="#i-hana"/></svg>SAP HANA</li>
                <li><svg><use href="#i-mssql"/></svg>MS SQL Server</li>
              </ul>
            </div>
            <div class="scroll vertical">
              <button class="up" title="上へ"></button>
              <span class="thumb"></span>
              <button class="down" title="下へ"></button>
            </div>
            <div class="scroll horizontal">
              <button class="left" title="左へ"></button>
              <span class="thumb"></span>
              <button class="right" title="右へ"></button>
            </div>
          </div>
        </section>
        <div class="splitter"></div>
        <section class="layers">
          <div class="dock-title">
            <h2>レイヤ</h2>
            <button title="フロート"><svg viewBox="0 0 10 10"><rect x=".5" y=".5" width="9" height="9" rx="2"/><path d="M4.500 2.500h3v3h-3zM2.500 4.500h3v3h-3z"/></svg></button>
            <button title="閉じる"><svg viewBox="0 0 10 10"><rect x=".5" y=".5" width="9" height="9" rx="2"/><path class="cross" d="M3 3l4 4M7 3L3 7"/></svg></button>
          </div>
          <div class="dock-tools">
            <button title="スタイル"><svg><use href="#i-broom"/></svg></button>
            <button title="グループを追加"><svg><use href="#i-group"/></svg></button>
            <button title="地図テーマ"><svg><use href="#i-eye"/></svg></button>
            <button title="凡例のフィルタ"><svg><use href="#i-lfilter"/></svg></button>
            <button title="式によるフィルタ" class="menu"><svg><use href="#i-expr"/></svg></button>
            <button title="その他" class="more">»</button>
          </div>
          <div class="layer-list">
            <label><input type="checkbox"><span class="symbol point"></span><i>融合ポイント</i></label>
            <label class="selected"><input type="checkbox" checked><span class="symbol line"></span><u>融合ライン</u></label>
            <label><input type="checkbox"><span class="symbol raster"></span><i>融合ポリゴン</i></label>
          </div>
        </section>
      </aside>
      <div class="dock-handle"></div>
      <svg class="map">
        <path d="M314 255l515 156M644 167L502 421M252 290l67 317"/>
      </svg>
    </main>

    <footer>
      <label class="search">
        <svg viewBox="0 0 12 12"><circle cx="5" cy="5" r="3.500"/><path d="M7.500 7.500l3.500 3.500"/></svg>
        <input type="text" placeholder="検索(Ctrl + K)" aria-label="検索">
      </label>
      <div class="status">
        <label for="coords">座標</label>
        <input id="coords" class="field" type="text" value="-2678428,5352433">
        <button title="範囲"><svg><use href="#i-extent"/></svg></button>
        <label for="scale">縮尺</label>
        <span class="field combo">
          <select id="scale"><option>171509264</option></select>
        </span>
        <button title="縮尺を固定"><svg><use href="#i-lock"/></svg></button>
        <label for="magnifier">拡大</label>
        <span class="field spin">
          <input id="magnifier" type="text" value="100%">
          <span class="steps"><button class="up" title="増やす"></button><button class="down" title="減らす"></button></span>
        </span>
        <label for="rotation">回転</label>
        <span class="field spin">
          <input id="rotation" type="text" value="0.0 °">
          <span class="steps"><button class="up" title="増やす"></button><button class="down" title="減らす"></button></span>
        </span>
        <label class="render"><input type="checkbox" checked>レンダ</label>
        <button class="crs"><svg><use href="#i-crs"/></svg>EPSG:6690</button>
        <button class="messages" title="メッセージ"><svg><use href="#i-bubble"/></svg></button>
      </div>
    </footer>
  </body>
</html>
```

FILE: styles.css
```css
* {
  box-sizing: border-box;
}
html,
body {
  margin: 0;
  height: 100vh;
  overflow: hidden;
}
body {
  display: flex;
  flex-direction: column;
  background: #efefef;
  border-right: 1px solid #5d9cc4;
  color: #1c1c1c;
  font-family: "Noto Sans", "Noto Sans CJK JP", sans-serif;
  font-size: 9px;
  line-height: 14px;
  font-feature-settings: "palt";
}
button {
  display: flex;
  align-items: center;
  justify-content: center;
  flex: none;
  padding: 0;
  border: 0;
  background: none;
  color: inherit;
  font: inherit;
  font-feature-settings: inherit;
  white-space: nowrap;
}
input,
select {
  margin: 0;
  padding: 0;
  border: 0;
  background: none;
  color: inherit;
  font: inherit;
}
h1,
h2 {
  margin: 0;
  font-size: inherit;
  font-weight: normal;
}
.sprite {
  display: none;
}

/* title and menus */
.titlebar {
  display: flex;
  align-items: center;
  height: 18px;
  padding-left: 2px;
  background: linear-gradient(90deg, #e9f4f8, #eaf2fa 20%, #e9f5f5 45%, #eaf3fa 65%, #ebf4f7);
}
.titlebar h1 {
  flex: 1;
}
.logo {
  width: 13px;
  height: 13px;
  margin-right: 4px;
}
.window-buttons {
  display: flex;
}
.window-buttons button {
  width: 36px;
  height: 18px;
}
.window-buttons button:last-child {
  width: 38px;
}
.window-buttons svg {
  width: 10px;
  height: 10px;
  fill: none;
  stroke: #222;
}
.menubar {
  display: grid;
  grid-template-columns: 63px 41px 42px 45px 41px 58px 46px 44px 67px 45px 54px 68px 50px;
  height: 16px;
  padding-left: 8px;
  border-bottom: 1px solid #d9d9d9;
}
.menubar button {
  justify-content: flex-start;
}

/* toolbars */
.toolbar {
  display: flex;
  align-items: center;
  height: 32px;
  border-bottom: 1px solid #c6c6c6;
  background: linear-gradient(#fafafa, #ececec);
}
.toolbar + .toolbar {
  height: 31px;
  border-bottom-color: #b4b4b4;
}
.toolbar button {
  width: 26px;
  height: 26px;
}
.toolbar svg {
  flex: none;
  width: 24px;
  height: 24px;
}
.toolbar .menu {
  width: 36px;
}
.menu::after {
  content: "";
  width: 7px;
  height: 4px;
  margin-left: 2px;
  background: #555;
  clip-path: polygon(0 0, 100% 0, 50% 100%);
}
button:disabled {
  filter: grayscale(0.8);
  opacity: 0.35;
}
.toolbar .pressed {
  border: 1px solid #b5b5b5;
  border-radius: 2px;
  background: #dadada;
}
.group {
  display: flex;
}
.group button {
  flex: 1;
}
.project {
  width: 158px;
}
.navigation {
  width: 422px;
}
.attributes {
  width: 106px;
}
.sources {
  width: 185px;
}
.edit {
  width: 186px;
}
.labels {
  width: 132px;
}
.labels button:disabled {
  opacity: 0.5;
}
.grip {
  width: 13px;
  height: 14px;
  background: linear-gradient(#b5b5b5 1px, transparent 1px) right 4px top / 1px 2px repeat-y,
    linear-gradient(#b5b5b5 1px, transparent 1px) right 6px top / 1px 2px repeat-y;
}
.grip.first {
  width: 10px;
}
.separator {
  width: 6px;
  height: 18px;
  background: linear-gradient(#ccc, #ccc) center / 1px 100% no-repeat;
}

/* docks */
main {
  display: flex;
  flex: 1;
  min-height: 0;
}
aside {
  display: flex;
  flex-direction: column;
  width: 143px;
}
.dock-title {
  display: flex;
  align-items: center;
  gap: 1px;
  height: 14px;
  padding: 0 1px 0 3px;
}
.dock-title h2 {
  flex: 1;
}
.dock-title svg {
  width: 10px;
  height: 10px;
  fill: none;
  stroke: #777;
}
.dock-title .cross {
  stroke: #333;
}
.dock-tools {
  display: flex;
  align-items: center;
  height: 26px;
  padding-left: 3px;
}
.dock-tools button {
  width: 20px;
}
.dock-tools svg {
  flex: none;
  width: 14px;
  height: 14px;
}
.dock-tools .menu {
  width: 28px;
}
.dock-tools .more {
  width: 14px;
  margin-left: auto;
  font-size: 13px;
}
.tree-frame {
  display: grid;
  grid-template-columns: 1fr 11px;
  grid-template-rows: 135px 12px;
  border: 1px solid #c0c0c0;
  background: #efefef;
}
.tree-view {
  overflow: hidden;
  background: #fff;
}
.tree {
  display: grid;
  grid-auto-rows: 1fr;
  height: 144px;
  margin: 0;
  padding: 0;
  list-style: none;
}
.tree li {
  display: flex;
  align-items: center;
  padding-left: 15px;
  white-space: nowrap;
}
.tree svg {
  width: 13px;
  height: 13px;
  margin-right: 4px;
}
.tree .branch {
  padding-left: 5px;
}
.branch::before {
  content: "";
  width: 4px;
  height: 6px;
  margin-right: 6px;
  background: #555;
  clip-path: polygon(0 0, 100% 50%, 0 100%);
}
.scroll {
  display: flex;
  background: #dcdcdc;
}
.scroll button {
  width: 11px;
  height: 11px;
  background: #f3f3f3;
}
.scroll .thumb {
  border: 1px solid #cfcfcf;
  background: #f8f8f8;
}
.vertical {
  flex-direction: column;
  border-left: 1px solid #ccc;
}
.vertical button {
  width: 100%;
}
.vertical .thumb {
  height: 57px;
}
.vertical .down {
  margin-top: auto;
}
.horizontal {
  border-top: 1px solid #ccc;
}
.horizontal .thumb {
  width: 99px;
}
.horizontal .right {
  margin-left: auto;
}
.scroll button::before,
.steps button::before {
  content: "";
  width: 6px;
  height: 4px;
  background: #555;
}
.up::before {
  clip-path: polygon(50% 0, 100% 100%, 0 100%);
}
.down::before {
  clip-path: polygon(0 0, 100% 0, 50% 100%);
}
.scroll .left::before,
.scroll .right::before {
  width: 4px;
  height: 6px;
  clip-path: polygon(0 0, 100% 50%, 0 100%);
}
.scroll .left::before {
  clip-path: polygon(100% 0, 100% 100%, 0 50%);
}
.splitter {
  width: 14px;
  height: 4px;
  margin: 0 auto;
  background: linear-gradient(90deg, #bbb 1px, transparent 1px) left center / 2px 1px repeat-x;
}
.layers {
  display: flex;
  flex: 1;
  flex-direction: column;
}
.layer-list {
  flex: 1;
  border: 1px solid #c0c0c0;
  background: #fff;
}
.layer-list label {
  display: flex;
  align-items: center;
  height: 14px;
  padding-left: 18px;
  color: #777;
}
.layer-list .selected {
  background: #0078d7;
  color: #fff;
}
input[type="checkbox"] {
  flex: none;
  appearance: none;
  width: 11px;
  height: 11px;
  border: 1px solid #ccc;
  background: #fff;
}
input[type="checkbox"]:checked::before {
  content: "";
  display: block;
  height: 9px;
  background: #111;
  clip-path: polygon(10% 50%, 28% 45%, 42% 68%, 75% 5%, 98% 5%, 48% 100%, 36% 100%);
}
.symbol {
  width: 12px;
  height: 12px;
  margin: 0 4px 0 5px;
}
.layer-list i {
  margin-left: 1px;
}
.point {
  border: 1px solid #24512e;
  border-radius: 50%;
  background: #0a0af5;
}
.line {
  height: 3px;
  background: #e815d4;
}
.raster {
  border: 1px solid #555;
  background: linear-gradient(135deg, #c8862c, #fff 50%, #159484);
}
.dock-handle {
  align-self: center;
  width: 5px;
  height: 14px;
  background: linear-gradient(#bbb 1px, transparent 1px) center top / 1px 2px repeat-y;
}
.map {
  flex: 1;
  height: 100%;
  border: 1px solid #b9b9b9;
  border-top: 0;
  background: #fff;
  fill: none;
  stroke: #ee08dc;
  stroke-width: 4;
}

/* status bar */
footer {
  display: flex;
  align-items: center;
  justify-content: space-between;
  height: 24px;
  padding: 0 2px 0 3px;
  border-bottom: 1px solid #b8c4c4;
  font-family: "Liberation Sans", "Noto Sans CJK JP", sans-serif;
}
.search {
  display: flex;
  align-items: center;
  gap: 5px;
  width: 160px;
  height: 18px;
  padding-left: 6px;
  border: 1px solid #b5b5b5;
  border-radius: 2px;
  background: #fff;
  font-size: 10px;
}
.search svg {
  width: 11px;
  height: 11px;
  fill: none;
  stroke: #888;
}
.search input {
  width: 130px;
}
.search input::placeholder {
  color: #777;
}
.status {
  display: flex;
  align-items: center;
}
.status svg {
  width: 12px;
  height: 12px;
}
.status > button {
  width: 20px;
}
.status > label {
  margin-right: 4px;
  margin-left: 6px;
}
.field {
  height: 17px;
  border: 1px solid #b9b9b9;
  border-radius: 2px;
  background: #fff;
}
#coords {
  width: 86px;
  padding-left: 4px;
}
.combo {
  display: flex;
  align-items: center;
  width: 64px;
}
.combo select {
  flex: 1;
  height: 15px;
  appearance: none;
  border-right: 1px solid #ccc;
}
.combo::after {
  content: "";
  width: 7px;
  height: 4px;
  margin: 0 4px;
  background: #666;
  clip-path: polygon(0 0, 100% 0, 50% 100%);
}
.spin {
  display: flex;
  width: 66px;
}
.spin input {
  flex: 1;
  min-width: 0;
  padding-left: 2px;
}
.steps {
  display: flex;
  flex-direction: column;
  justify-content: center;
  gap: 2px;
  width: 11px;
  border-left: 1px solid #ccc;
}
.status .render {
  display: flex;
  align-items: center;
  gap: 4px;
  margin-left: 5px;
}
.status .crs {
  gap: 2px;
  width: auto;
  margin: 0 14px 0 4px;
  font-size: 8px;
}
.status .messages svg {
  width: 14px;
  height: 14px;
}
```
